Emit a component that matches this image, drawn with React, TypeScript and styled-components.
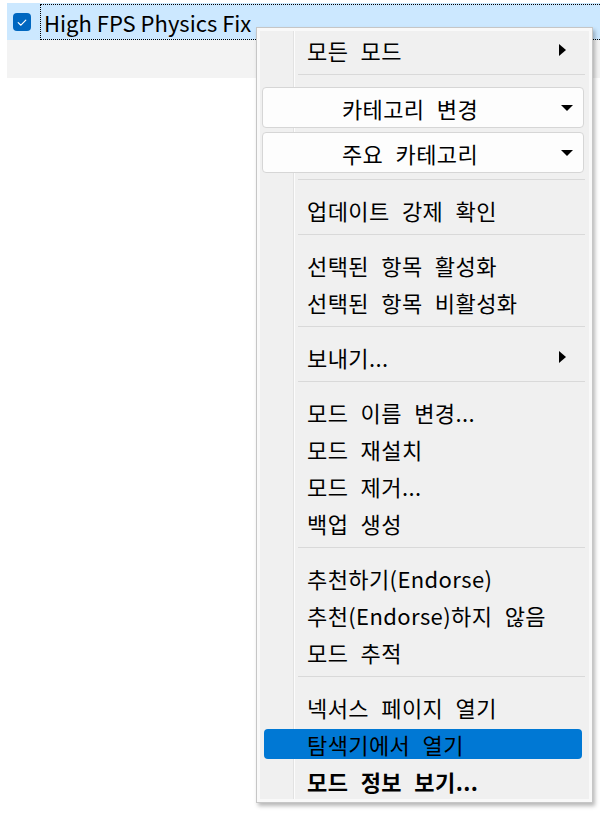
import React from 'react';
import styled, { createGlobalStyle } from 'styled-components';

const GlobalStyle = createGlobalStyle`
    body {
        margin: 0;
        background: #ffffff;
        font-family: 'Noto Sans CJK KR', 'Noto Sans', sans-serif;
    }`;

const Page = styled.div`
    position: relative;
    width: 600px;
    height: 815px;
    overflow: hidden;
    background: #ffffff;`;

const ListArea = styled.div`
    margin: 3px 0 0 7px;
    height: 75px;
    background: #f3f3f3;`;

const SelectedRow = styled.div`
    display: flex;
    align-items: center;
    height: 37px;
    padding-left: 6px;
    background: #cce8ff;`;

const CheckBox = styled.div`
    display: flex;
    width: 18px;
    height: 18px;
    border-radius: 4px;
    background: #0067c0;
    flex-shrink: 0;`;

const FocusRect = styled.div`
    flex: 1;
    display: flex;
    align-items: center;
    height: 34px;
    margin: 1px 0 0 9px;
    padding-left: 3px;
    border: 1px dotted #000000;
    border-right: none;
    font-size: 22px;
    color: #000000;`;

const Menu = styled.div`
    position: absolute;
    left: 256px;
    top: 27px;
    width: 337px;
    padding: 3px;
    box-sizing: border-box;
    background: #f9f9f9;
    border: 1px solid #c6c6c6;
    box-shadow: 2px 3px 4px rgba(0, 0, 0, 0.28);`;

const MenuBody = styled.div`
    display: flex;
    flex-direction: column;
    padding: 0;
    background-color: #f0f0f0;
    background-image: linear-gradient(to right,
        transparent 33px, #e2e2e2 33px, #e2e2e2 34px,
        #fcfcfc 34px, #fcfcfc 35px, transparent 35px);`;

const Item = styled.div<{ $active?: boolean; $bold?: boolean }>`
    display: flex;
    align-items: center;
    height: 30px;
    margin: 3.5px 7px 3.5px 4px;
    padding: 0 16px 0 43px;
    border-radius: 4px;
    font-size: 22px;
    letter-spacing: 0.4px;
    word-spacing: 7px;
    font-weight: ${p => (p.$bold ? 700 : 400)};
    color: #000000;
    white-space: nowrap;
    background: ${p => (p.$active ? '#0078d4' : 'transparent')};`;

const SubArrow = styled.svg`
    margin-left: auto;
    width: 7px;
    height: 12px;`;

const Separator = styled.div`
    height: 1px;
    margin: 6px 4px 11px 38px;
    background: #d9d9d9;`;

const ComboGroup = styled.div`
    display: flex;
    flex-direction: column;
    gap: 4px;
    padding: 1px 5px 0 2px;`;

const Combo = styled.div`
    display: flex;
    align-items: center;
    height: 41px;
    box-sizing: border-box;
    padding-left: 6px;
    border: 1px solid #d6d6d6;
    border-radius: 4px;
    background: #fdfdfd;`;

const ComboLabel = styled.span`
    flex: 1;
    text-align: center;
    font-size: 22px;
    letter-spacing: 0.4px;
    word-spacing: 7px;
    color: #000000;`;

const ComboArrow = styled.div`
    display: flex;
    justify-content: center;
    align-items: center;
    width: 32px;`;

const Tick = () => (
    <svg width="18" height="18" viewBox="0 0 18 18">
        <path d="M5.2 9.6 L7.9 12.2 L12.8 7.2" fill="none" stroke="#ffffff" strokeWidth="1.2" strokeLinecap="round" strokeLinejoin="round" />
    </svg>
);

const RightArrow = () => (
    <SubArrow viewBox="0 0 7 12">
        <polygon points="0,0 7,6 0,12" fill="#000000" />
    </SubArrow>
);

const DownArrow = () => (
    <svg width="12" height="6" viewBox="0 0 12 6">
        <polygon points="0,0 12,0 6,6" fill="#000000" />
    </svg>
);

const groups: string[][] = [
    ['업데이트 강제 확인'],
    ['선택된 항목 활성화', '선택된 항목 비활성화'],
];

const App = () => {
    return (
        <Page>
            <GlobalStyle />
            <ListArea>
                <SelectedRow>
                    <CheckBox>
                        <Tick />
                    </CheckBox>
                    <FocusRect>High FPS Physics Fix</FocusRect>
                </SelectedRow>
            </ListArea>
            <Menu>
                <MenuBody>
                    <Item>
                        모든 모드
                        <RightArrow />
                    </Item>
                    <Separator />
                    <ComboGroup>
                        <Combo>
                            <ComboLabel>카테고리 변경</ComboLabel>
                            <ComboArrow><DownArrow /></ComboArrow>
                        </Combo>
                        <Combo>
                            <ComboLabel>주요 카테고리</ComboLabel>
                            <ComboArrow><DownArrow /></ComboArrow>
                        </Combo>
                    </ComboGroup>
                    {groups.map((g, i) => (
                        <React.Fragment key={i}>
                            <Separator />
                            {g.map(label => <Item key={label}>{label}</Item>)}
                        </React.Fragment>
                    ))}
                    <Separator />
                    <Item>
                        보내기...
                        <RightArrow />
                    </Item>
                    <Separator />
                    <Item>모드 이름 변경...</Item>
                    <Item>모드 재설치</Item>
                    <Item>모드 제거...</Item>
                    <Item>백업 생성</Item>
                    <Separator />
                    <Item>추천하기(Endorse)</Item>
                    <Item>추천(Endorse)하지 않음</Item>
                    <Item>모드 추적</Item>
                    <Separator />
                    <Item>넥서스 페이지 열기</Item>
                    <Item $active>탐색기에서 열기</Item>
                    <Item $bold>모드 정보 보기...</Item>
                </MenuBody>
            </Menu>
        </Page>
    );
};

export default App;
